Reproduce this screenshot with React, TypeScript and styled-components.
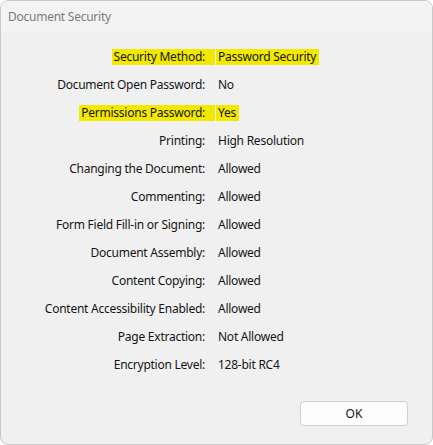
import * as React from "react";
import styled, { createGlobalStyle } from "styled-components";

const GlobalStyle = createGlobalStyle`
  html, body {
    margin: 0;
    padding: 0;
    background: #ffffff;
  }
  * {
    box-sizing: border-box;
  }
`;

const Window = styled.div`
  width: 433px;
  height: 445px;
  display: flex;
  flex-direction: column;
  background: #f0f0f0;
  border: 1px solid #c9c9c9;
  border-radius: 8px;
  overflow: hidden;
  font-family: "Noto Sans", "Open Sans", sans-serif;
  font-size: 12px;
  letter-spacing: -0.25px;
  color: #151515;
`;

const TitleBar = styled.div`
  height: 31px;
  display: flex;
  align-items: center;
  padding-left: 7px;
  background: #f3f3f3;
  color: #7a7a7a;
`;

const Body = styled.div`
  flex: 1;
  display: flex;
  flex-direction: column;
  padding: 11px 24px 18px 0;
`;

const Grid = styled.div`
  display: grid;
  grid-template-columns: 214px auto;
  grid-auto-rows: 28px;
  align-items: center;
`;

const LabelCell = styled.div`
  display: flex;
  justify-content: flex-end;
`;

const ValueCell = styled.div`
  display: flex;
  justify-content: flex-start;
`;

const Label = styled.span<{ $marked?: boolean }>`
  padding: 0 10px 0 2px;
  line-height: 16px;
  background: ${(p) => (p.$marked ? "#f2e800" : "transparent")};
`;

const Value = styled.span<{ $marked?: boolean }>`
  padding: 0 3px 0 2px;
  margin-left: 1px;
  line-height: 16px;
  background: ${(p) => (p.$marked ? "#f2e800" : "transparent")};
`;

const Footer = styled.div`
  margin-top: auto;
  display: flex;
  justify-content: flex-end;
`;

const Button = styled.button`
  width: 108px;
  height: 25px;
  background: #fdfdfd;
  border: 1px solid #d0d0d0;
  border-radius: 4px;
  font-family: inherit;
  font-size: 12px;
  color: #151515;
  padding: 0;
`;

const rows: { label: string; value: string; marked?: boolean }[] = [
  { label: "Security Method:", value: "Password Security", marked: true },
  { label: "Document Open Password:", value: "No" },
  { label: "Permissions Password:", value: "Yes", marked: true },
  { label: "Printing:", value: "High Resolution" },
  { label: "Changing the Document:", value: "Allowed" },
  { label: "Commenting:", value: "Allowed" },
  { label: "Form Field Fill-in or Signing:", value: "Allowed" },
  { label: "Document Assembly:", value: "Allowed" },
  { label: "Content Copying:", value: "Allowed" },
  { label: "Content Accessibility Enabled:", value: "Allowed" },
  { label: "Page Extraction:", value: "Not Allowed" },
  { label: "Encryption Level:", value: "128-bit RC4" },
];

const App = () => (
  <>
    <GlobalStyle />
    <Window>
      <TitleBar>Document Security</TitleBar>
      <Body>
        <Grid>
          {rows.map((r) => (
            <React.Fragment key={r.label}>
              <LabelCell>
                <Label $marked={r.marked}>{r.label}</Label>
              </LabelCell>
              <ValueCell>
                <Value $marked={r.marked}>{r.value}</Value>
              </ValueCell>
            </React.Fragment>
          ))}
        </Grid>
        <Footer>
          <Button>OK</Button>
        </Footer>
      </Body>
    </Window>
  </>
);

export default App;
